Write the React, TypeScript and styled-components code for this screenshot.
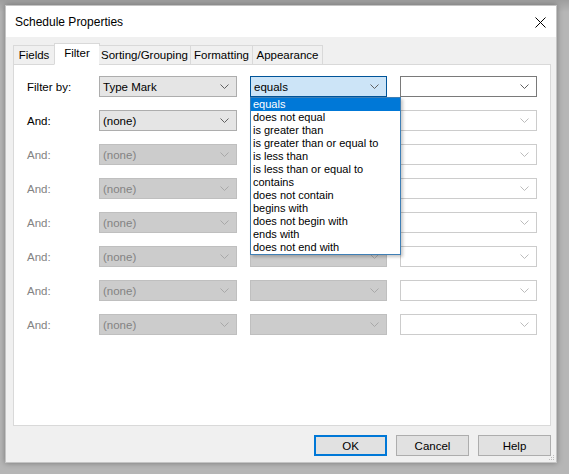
import React from "react";
import styled, { createGlobalStyle, css } from "styled-components";

const GlobalStyle = createGlobalStyle`
  html, body {
    margin: 0;
    padding: 0;
    background: #b4b4b4;
  }
  body {
    font-family: "Liberation Sans", Arial, sans-serif;
    font-size: 11.5px;
    color: #000;
  }
`;

const Screen = styled.div`
  width: 569px;
  height: 474px;
  padding: 5px 0 0 5px;
  box-sizing: border-box;
  background: linear-gradient(180deg, #9e9e9e 0px, #b6b6b6 12px, #b6b6b6 100%);
`;

const Window = styled.div`
  position: relative;
  width: 552px;
  height: 458px;
  box-sizing: border-box;
  background: #f0f0f0;
  border: 1px solid #c4c4c4;
  box-shadow: 0 0 6px rgba(0, 0, 0, 0.35);
  display: flex;
  flex-direction: column;
`;

const TitleBar = styled.div`
  height: 31px;
  background: #fff;
  display: flex;
  align-items: center;
  justify-content: space-between;
  padding: 0 9px 0 9px;
`;

const Title = styled.span`
  font-size: 12px;
  margin-top: 1px;
`;

const CloseButton = styled.div`
  width: 14px;
  height: 14px;
  display: flex;
  align-items: center;
  justify-content: center;
  margin-top: 1px;
`;

const Content = styled.div`
  flex: 1;
  display: flex;
  flex-direction: column;
  padding: 6px 5px 0 7px;
`;

const TabStrip = styled.div`
  display: flex;
  align-items: flex-end;
  height: 22px;
  position: relative;
  z-index: 1;
  margin-bottom: -1px;
`;

const Tab = styled.div<{ $active?: boolean; $w: number }>`
  width: ${(p) => p.$w}px;
  height: 20px;
  box-sizing: border-box;
  display: flex;
  align-items: center;
  justify-content: center;
  white-space: nowrap;
  border: 1px solid #d9d9d9;
  border-left-width: 0;
  background: #f0f0f0;
  &:first-child {
    border-left-width: 1px;
  }
  ${(p) =>
    p.$active &&
    css`
      height: 22px;
      background: #fff;
      border-left-width: 1px;
      border-bottom-color: #fff;
      margin-left: -1px;
      margin-right: -1px;
      padding-bottom: 3px;
    `}
`;

const Panel = styled.div`
  height: 362px;
  box-sizing: border-box;
  background: #fff;
  border: 1px solid #d9d9d9;
  padding: 11px 0 0 13px;
`;

const FilterGrid = styled.div`
  display: grid;
  grid-template-columns: 59px 138px 137px 137px;
  grid-auto-rows: 21px;
  column-gap: 13px;
  row-gap: 13px;
  align-items: center;
`;

const Label = styled.span<{ $disabled?: boolean }>`
  color: ${(p) => (p.$disabled ? "#838383" : "#000")};
  white-space: nowrap;
`;

type ComboKind = "normal" | "open" | "disabled" | "blank" | "blankDisabled";

const comboLook: Record<ComboKind, { bg: string; border: string; text: string; chevron: string }> = {
  normal: { bg: "#e5e5e5", border: "#adadad", text: "#000", chevron: "#606060" },
  open: { bg: "#cce4f7", border: "#005499", text: "#000", chevron: "#606060" },
  disabled: { bg: "#cccccc", border: "#bfbfbf", text: "#838383", chevron: "#a8a8a8" },
  blank: { bg: "#fff", border: "#7a7a7a", text: "#000", chevron: "#606060" },
  blankDisabled: { bg: "#fff", border: "#cccccc", text: "#838383", chevron: "#bcbcbc" },
};

const ComboCell = styled.div`
  position: relative;
  height: 21px;
`;

const ComboBox = styled.div<{ $kind: ComboKind }>`
  height: 21px;
  box-sizing: border-box;
  display: flex;
  align-items: center;
  justify-content: space-between;
  padding: 0 7px 0 3px;
  background: ${(p) => comboLook[p.$kind].bg};
  border: 1px solid ${(p) => comboLook[p.$kind].border};
  color: ${(p) => comboLook[p.$kind].text};
`;

const ComboText = styled.span`
  white-space: nowrap;
`;

const DropList = styled.ul`
  position: absolute;
  top: 21px;
  left: 0;
  width: 149px;
  margin: 0;
  padding: 0;
  list-style: none;
  background: #fff;
  border: 1px solid #3f7fb5;
  box-shadow: 2px 2px 3px rgba(0, 0, 0, 0.22);
  z-index: 5;
`;

const DropItem = styled.li<{ $selected?: boolean }>`
  height: 13px;
  line-height: 13px;
  font-size: 11px;
  padding-left: 2px;
  white-space: nowrap;
  background: ${(p) => (p.$selected ? "#0078d7" : "transparent")};
  color: ${(p) => (p.$selected ? "#fff" : "#000")};
`;

const ButtonRow = styled.div`
  display: flex;
  justify-content: flex-end;
  gap: 9px;
  margin-top: 9px;
`;

const Button = styled.div<{ $default?: boolean }>`
  width: 73px;
  height: 21px;
  box-sizing: border-box;
  display: flex;
  align-items: center;
  justify-content: center;
  background: #e1e1e1;
  border: ${(p) => (p.$default ? "2px solid #0078d7" : "1px solid #adadad")};
`;

const Grip = styled.svg`
  position: absolute;
  right: 1px;
  bottom: 1px;
`;

const Chevron = ({ color }: { color: string }) => (
  <svg width="9" height="5" viewBox="0 0 9 5">
    <path d="M0.5 0.5 L4.5 4.5 L8.5 0.5" fill="none" stroke={color} strokeWidth="1" />
  </svg>
);

const Combo = ({ kind, text }: { kind: ComboKind; text?: string }) => (
  <ComboBox $kind={kind}>
    <ComboText>{text}</ComboText>
    <Chevron color={comboLook[kind].chevron} />
  </ComboBox>
);

const tabs = [
  { name: "Fields", w: 42 },
  { name: "Filter", w: 46 },
  { name: "Sorting/Grouping", w: 92 },
  { name: "Formatting", w: 62 },
  { name: "Appearance", w: 70 },
];

const operators = [
  "equals",
  "does not equal",
  "is greater than",
  "is greater than or equal to",
  "is less than",
  "is less than or equal to",
  "contains",
  "does not contain",
  "begins with",
  "does not begin with",
  "ends with",
  "does not end with",
];

type Row = {
  label: string;
  labelDisabled: boolean;
  field: ComboKind;
  fieldText: string;
  op: ComboKind;
  opText?: string;
  value: ComboKind;
};

const rows: Row[] = [
  { label: "Filter by:", labelDisabled: false, field: "normal", fieldText: "Type Mark", op: "open", opText: "equals", value: "blank" },
  { label: "And:", labelDisabled: false, field: "normal", fieldText: "(none)", op: "disabled", value: "blankDisabled" },
  ...Array.from({ length: 6 }, () => ({
    label: "And:",
    labelDisabled: true,
    field: "disabled" as ComboKind,
    fieldText: "(none)",
    op: "disabled" as ComboKind,
    value: "blankDisabled" as ComboKind,
  })),
];

export default function App() {
  return (
    <>
      <GlobalStyle />
      <Screen>
        <Window>
          <TitleBar>
            <Title>Schedule Properties</Title>
            <CloseButton>
              <svg width="11" height="11" viewBox="0 0 11 11">
                <path d="M0.5 0.5 L10.5 10.5 M10.5 0.5 L0.5 10.5" stroke="#000" strokeWidth="1" />
              </svg>
            </CloseButton>
          </TitleBar>
          <Content>
            <TabStrip>
              {tabs.map((t) => (
                <Tab key={t.name} $w={t.w} $active={t.name === "Filter"}>
                  {t.name}
                </Tab>
              ))}
            </TabStrip>
            <Panel>
              <FilterGrid>
                {rows.map((r, i) => (
                  <React.Fragment key={i}>
                    <Label $disabled={r.labelDisabled}>{r.label}</Label>
                    <Combo kind={r.field} text={r.fieldText} />
                    <ComboCell>
                      <Combo kind={r.op} text={r.opText} />
                      {r.op === "open" && (
                        <DropList>
                          {operators.map((o, j) => (
                            <DropItem key={o} $selected={j === 0}>
                              {o}
                            </DropItem>
                          ))}
                        </DropList>
                      )}
                    </ComboCell>
                    <Combo kind={r.value} />
                  </React.Fragment>
                ))}
              </FilterGrid>
            </Panel>
            <ButtonRow>
              <Button $default>OK</Button>
              <Button>Cancel</Button>
              <Button>Help</Button>
            </ButtonRow>
          </Content>
          <Grip width="6" height="6" viewBox="0 0 6 6">
            <rect x="4" y="0" width="1" height="1" fill="#bcbcbc" />
            <rect x="2" y="2" width="1" height="1" fill="#bcbcbc" />
            <rect x="4" y="2" width="1" height="1" fill="#bcbcbc" />
            <rect x="0" y="4" width="1" height="1" fill="#bcbcbc" />
            <rect x="2" y="4" width="1" height="1" fill="#bcbcbc" />
            <rect x="4" y="4" width="1" height="1" fill="#bcbcbc" />
          </Grip>
        </Window>
      </Screen>
    </>
  );
}
